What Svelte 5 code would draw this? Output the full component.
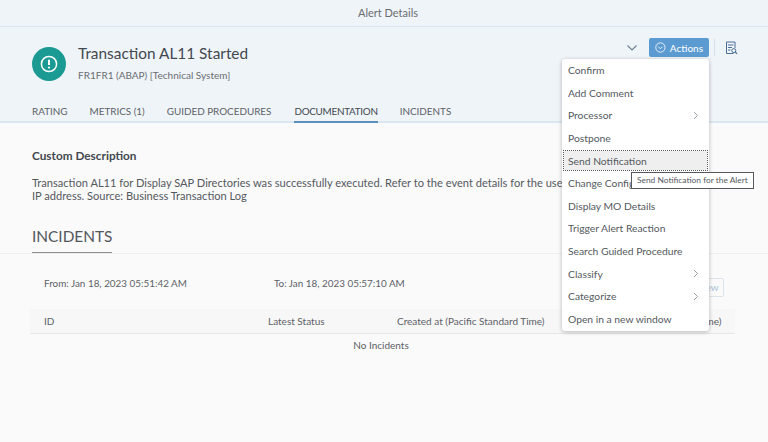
<script>
  const tabs = ['RATING', 'METRICS (1)', 'GUIDED PROCEDURES', 'DOCUMENTATION', 'INCIDENTS'];
  const items = [
    ['Confirm', false], ['Add Comment', false], ['Processor', true], ['Postpone', false],
    ['Send Notification', false], ['Change Configuration', false], ['Display MO Details', false],
    ['Trigger Alert Reaction', false], ['Search Guided Procedure', false], ['Classify', true],
    ['Categorize', true], ['Open in a new window', false]
  ];
</script>

<div class="page">
  <div class="titlebar">Alert Details</div>
  <header class="head">
    <div class="headrow">
      <div class="badge">
        <svg width="20" height="20" viewBox="0 0 20 20"><circle cx="10" cy="10" r="7.6" fill="none" stroke="#fff" stroke-width="1.5"/><path d="M10 5.8v5.2" stroke="#fff" stroke-width="2"/><circle cx="10" cy="13.6" r="1.1" fill="#fff"/></svg>
      </div>
      <div class="titles">
        <h1>Transaction AL11 Started</h1>
        <p>FR1FR1 (ABAP) [Technical System]</p>
      </div>
      <div class="tools">
        <svg class="chev" width="12" height="8" viewBox="0 0 12 8"><path d="M1.5 1.5 6 6l4.5-4.5" fill="none" stroke="#6a7d92" stroke-width="1.1"/></svg>
        <button class="actions">
          <svg width="13" height="13" viewBox="0 0 13 13"><circle cx="6.5" cy="6.5" r="5.6" fill="none" stroke="#fff" stroke-width="1"/><path d="M4 5.5l2.5 2.5L9 5.5" fill="none" stroke="#fff" stroke-width="1"/></svg>
          Actions
        </button>
        <span class="sep"></span>
        <svg width="13" height="14" viewBox="0 0 13 14"><path d="M8.5 12.5h-7V1h8.5v6M3 4h5.5M3 6.5h4M3 9h2.5" fill="none" stroke="#4a6f96" stroke-width="1"/><circle cx="8.8" cy="9.6" r="2" fill="none" stroke="#4a6f96" stroke-width="1"/><path d="M10.3 11l1.7 1.8" stroke="#4a6f96" stroke-width="1.2"/></svg>
      </div>
    </div>
    <nav class="tabs">
      {#each tabs as t}
        <span class="tab" class:active={t === 'DOCUMENTATION'}>{t}</span>
      {/each}
    </nav>
  </header>

  <main class="content">
    <h2>Custom Description</h2>
    <p class="desc">Transaction AL11 for Display SAP Directories was successfully executed. Refer to the event details for the user name and<br>IP address. Source: Business Transaction Log</p>
    <div class="section"><span>INCIDENTS</span></div>
    <div class="range">
      <span class="from">From: Jan 18, 2023 05:51:42 AM</span>
      <span class="to">To: Jan 18, 2023 05:57:10 AM</span>
      <span class="view">View</span>
    </div>
    <div class="thead">
      <span class="c1">ID</span>
      <span class="c2">Latest Status</span>
      <span class="c3">Created at (Pacific Standard Time)</span>
      <span class="c4">Updated at (Pacific Standard Time)</span>
    </div>
    <div class="empty">No Incidents</div>
  </main>

  <div class="menu">
    {#each items as [label, sub]}
      <div class="item" class:focus={label === 'Send Notification'}>
        <span>{label}</span>
        {#if sub}<svg width="6" height="9" viewBox="0 0 6 9"><path d="M1 1l3.5 3.5L1 8" fill="none" stroke="#9aa3ab" stroke-width="1"/></svg>{/if}
      </div>
    {/each}
  </div>
  <div class="tip">Send Notification for the Alert</div>
</div>

<style>
  :global(body) { margin: 0; background: #fafafa; }
  .page { position: relative; width: 768px; height: 442px; overflow: hidden; background: #fafafa; color: #4a4f54; font-family: "Lato", sans-serif; font-size: 11px; }
  .titlebar { height: 27px; box-sizing: border-box; line-height: 26px; padding-left: 8px; text-align: center; background: #eff4f9; border-bottom: 1px solid #dce6f0; color: #6a6d70; font-size: 11px; }
  .head { height: 96px; box-sizing: border-box; background: #eff4f9; border-bottom: 2px solid #dbe6f2; display: flex; flex-direction: column; justify-content: space-between; padding: 0 32px; }
  .headrow { display: flex; align-items: flex-start; padding-top: 20px; }
  .badge { width: 34px; height: 34px; border-radius: 50%; background: #1a9a93; display: flex; align-items: center; justify-content: center; }
  .titles { margin-left: 12px; margin-top: -4px; }
  h1 { margin: 0; font-size: 15.4px; font-weight: 400; line-height: 20px; color: #42484e; }
  .titles p { margin: 5px 0 0; font-size: 10px; line-height: 14px; color: #6a6d70; }
  .tools { margin-left: auto; display: flex; align-items: center; margin-top: -9px; margin-right: -2px; }
  .chev { margin-right: 11px; }
  .actions { display: flex; align-items: center; gap: 4px; width: 60px; height: 19px; box-sizing: border-box; padding: 0 6px; border: 0; border-radius: 2px; background: #5b9bd1; color: #fff; font: inherit; font-size: 10px; }
  .sep { width: 1px; height: 17px; background: #d6e0ea; margin: 0 10px 0 5px; }
  .tabs { display: flex; gap: 22px; margin-bottom: -2px; }
  .tab { height: 22px; line-height: 21px; box-sizing: border-box; color: #5d6166; font-size: 9.9px; }
  .tab.active { border-bottom: 2px solid #5d8fbd; color: #42484e; letter-spacing: -.28px; margin-left: 1px; }
  .content { padding: 26px 32px 0; }
  h2 { margin: 0; font-size: 11.8px; font-weight: 700; line-height: 14px; color: #42484e; }
  .desc { margin: 13px 0 0; line-height: 13px; font-size: 11.1px; white-space: nowrap; color: #55595e; }
  .section { margin: 24px -32px 0; padding: 0 32px; border-bottom: 1px solid #eeeeee; height: 27px; }
  .section span { display: inline-block; height: 27px; line-height: 21px; box-sizing: border-box; border-bottom: 1px solid #8a8d90; font-size: 15.4px; color: #53575c; }
  .range { display: flex; align-items: flex-start; height: 24px; margin: 19px 0 0; padding-left: 12px; font-size: 9.9px; line-height: 20px; color: #5d6166; }
  .to { margin-left: 87px; }
  .view { margin: 5px 12px 0 auto; width: 33px; height: 19px; box-sizing: border-box; border: 1px solid #dce3ea; border-radius: 2px; line-height: 17px; text-align: center; color: #a9c1d8; }
  .thead { display: flex; align-items: center; height: 24px; margin: 12px 1px 0 -2px; padding: 0 14px; background: #f7f7f7; border-bottom: 1px solid #e6e6e6; font-size: 10px; color: #5d6166; white-space: nowrap; }
  .thead span { flex: none; }
  .c1 { width: 224px; }
  .c2 { width: 129px; }
  .c3 { width: 174px; }
  .empty { text-align: center; line-height: 22px; font-size: 10px; color: #5d6166; margin-left: -6px; }
  .menu { position: absolute; left: 562px; top: 59px; width: 147px; height: 272px; box-sizing: border-box; background: #fff; border-radius: 3px; box-shadow: 0 1px 4px rgba(0,0,0,.28); }
  .item { display: flex; align-items: center; justify-content: space-between; height: 22.6px; box-sizing: border-box; padding: 0 10px 0 6px; font-size: 10.3px; color: #55595e; }
  .item.focus { border: 2px solid transparent; padding: 0 8px 0 4px; background: #efefef; background-clip: padding-box; outline: 1px dotted #55595e; outline-offset: -2px; }
  .tip { position: absolute; left: 631px; top: 172px; height: 17px; box-sizing: border-box; padding: 0 5px; line-height: 15px; background: #fff; border: 1px solid #55595e; font-size: 8.4px; color: #55595e; white-space: nowrap; }
</style>
